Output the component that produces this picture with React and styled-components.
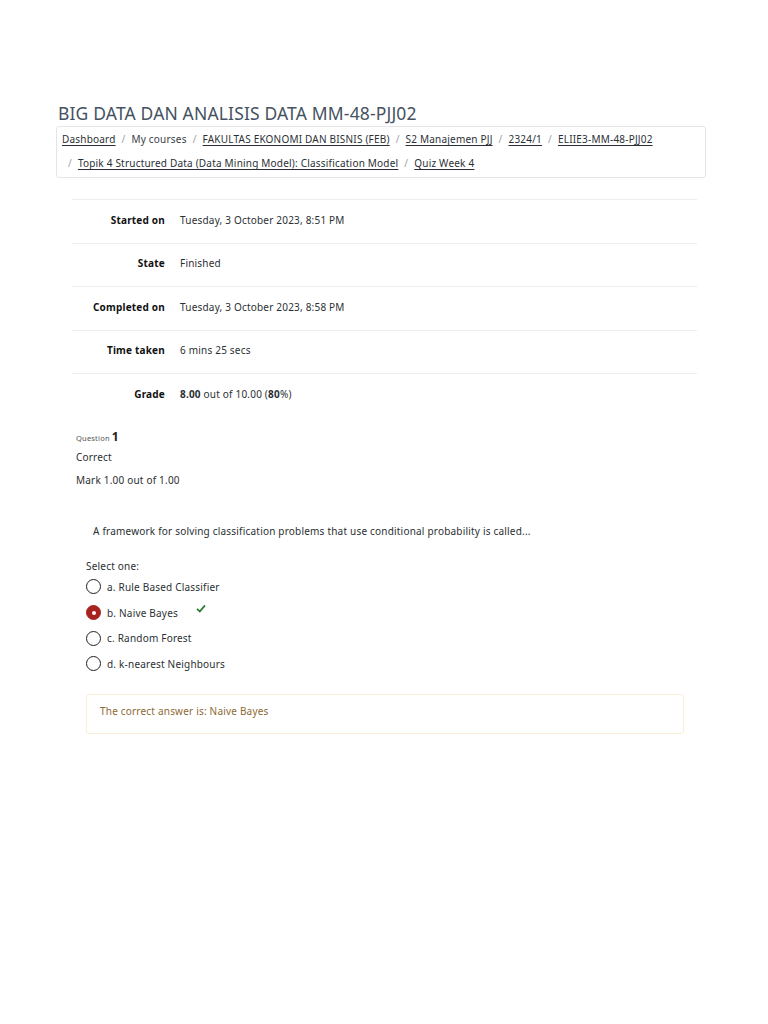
import React from 'react';
import styled, { createGlobalStyle } from 'styled-components';

const GlobalStyle = createGlobalStyle`
  html, body {
    margin: 0;
    padding: 0;
    background: #fff;
  }
  body {
    font-family: "Noto Sans", "Open Sans", sans-serif;
    color: #1d2125;
  }
`;

const Page = styled.div`
  width: 768px;
  min-height: 1024px;
  padding: 101px 62px 0 56px;
  box-sizing: border-box;
`;

const Title = styled.h1`
  margin: 0 0 0 2px;
  font-size: 17.5px;
  font-weight: 400;
  line-height: 24px;
  color: #45525f;
  letter-spacing: 0.15px;
`;

const Breadcrumb = styled.nav`
  margin-top: 1px;
  border: 1px solid #e3e6e8;
  border-radius: 3px;
  padding: 0 5px 2px 5px;
  display: flex;
  flex-wrap: wrap;
  font-size: 10px;
  letter-spacing: 0.2px;
  line-height: 24px;
  color: #3b4148;
`;

const Crumb = styled.span`
  display: inline-flex;
  align-items: center;
  white-space: nowrap;
`;

const CrumbLink = styled.a`
  color: #2a2f35;
  text-decoration: underline;
  text-underline-offset: 2px;
  cursor: pointer;
`;

const Sep = styled.span`
  color: #9aa0a6;
  margin: 0 6px;
`;

const Summary = styled.table`
  margin: 21px 9px 0 16px;
  width: 625px;
  border-collapse: collapse;
  font-size: 10px;
  letter-spacing: 0.2px;
`;

const Row = styled.tr`
  border-top: 1px solid #eceef0;
  height: 43.5px;
`;

const Label = styled.th`
  width: 93px;
  text-align: right;
  font-weight: 700;
  color: #111;
  padding: 0 0 3px 0;
  font-size: 10px;
`;

const Value = styled.td`
  padding: 0 0 3px 15px;
  color: #2b2f33;
`;

const Info = styled.div`
  margin: 12px 0 0 20px;
  font-size: 10px;
  letter-spacing: 0.2px;
  color: #2b2f33;
`;

const QNo = styled.div`
  font-size: 7.5px;
  color: #555;
  line-height: 16px;
  b {
    font-size: 12px;
    color: #1d2125;
    margin-left: 2px;
  }
`;

const InfoLine = styled.div`
  line-height: 23px;
`;

const Content = styled.div`
  margin: 31px 0 0 30px;
  width: 598px;
  font-size: 10px;
  letter-spacing: 0.2px;
  color: #2b2f33;
`;

const QText = styled.p`
  margin: 0 0 0 7px;
  line-height: 16px;
`;

const Prompt = styled.div`
  margin-top: 19px;
  line-height: 16px;
`;

const Options = styled.div`
  display: flex;
  flex-direction: column;
`;

const Option = styled.label`
  display: flex;
  align-items: center;
  height: 25.7px;
`;

const Radio = styled.span`
  width: 15px;
  height: 15px;
  box-sizing: border-box;
  border-radius: 50%;
  border: 1.7px solid ${p => (p.checked ? '#a8231f' : '#222')};
  background: ${p => (p.checked ? '#a8231f' : '#fff')};
  display: inline-flex;
  align-items: center;
  justify-content: center;
  flex: none;
  &::after {
    content: '';
    width: 4px;
    height: 4px;
    border-radius: 50%;
    background: ${p => (p.checked ? '#fff' : 'transparent')};
  }
`;

const OptText = styled.span`
  margin-left: 6px;
  font-size: 10px;
`;

const Check = styled.svg`
  margin-left: 18px;
  margin-top: -8px;
`;

const Feedback = styled.div`
  margin-top: 17px;
  border: 1px solid #fbeed9;
  border-radius: 3px;
  padding: 7px 13px 13px 13px;
  font-size: 10px;
  line-height: 18px;
  color: #8c6a34;
`;

const crumbs = [
  { text: 'Dashboard', link: true },
  { text: 'My courses' },
  { text: 'FAKULTAS EKONOMI DAN BISNIS (FEB)', link: true },
  { text: 'S2 Manajemen PJJ', link: true },
  { text: '2324/1', link: true },
  { text: 'ELIIE3-MM-48-PJJ02', link: true },
  { text: 'Topik 4 Structured Data (Data Mining Model): Classification Model', link: true },
  { text: 'Quiz Week 4', link: true },
];

const options = [
  { key: 'a', text: 'Rule Based Classifier' },
  { key: 'b', text: 'Naive Bayes', checked: true },
  { key: 'c', text: 'Random Forest' },
  { key: 'd', text: 'k-nearest Neighbours' },
];

const App = () => {
  return (
    <>
      <GlobalStyle />
      <Page>
        <Title>BIG DATA DAN ANALISIS DATA MM-48-PJJ02</Title>
        <Breadcrumb>
          {crumbs.map((c, i) => (
            <Crumb key={i}>
              {i > 0 && <Sep>/</Sep>}
              {c.link ? <CrumbLink>{c.text}</CrumbLink> : <span>{c.text}</span>}
            </Crumb>
          ))}
        </Breadcrumb>

        <Summary>
          <tbody>
            <Row>
              <Label>Started on</Label>
              <Value>Tuesday, 3 October 2023, 8:51 PM</Value>
            </Row>
            <Row>
              <Label>State</Label>
              <Value>Finished</Value>
            </Row>
            <Row>
              <Label>Completed on</Label>
              <Value>Tuesday, 3 October 2023, 8:58 PM</Value>
            </Row>
            <Row>
              <Label>Time taken</Label>
              <Value>6 mins 25 secs</Value>
            </Row>
            <Row>
              <Label>Grade</Label>
              <Value><b>8.00</b> out of 10.00 (<b>80</b>%)</Value>
            </Row>
          </tbody>
        </Summary>

        <Info>
          <QNo>Question<b>1</b></QNo>
          <InfoLine>Correct</InfoLine>
          <InfoLine>Mark 1.00 out of 1.00</InfoLine>
        </Info>

        <Content>
          <QText>A framework for solving classification problems that use conditional probability is called...</QText>
          <Prompt>Select one:</Prompt>
          <Options>
            {options.map(o => (
              <Option key={o.key}>
                <Radio checked={o.checked} />
                <OptText>{o.key}. {o.text}</OptText>
                {o.checked && (
                  <Check width="10" height="9" viewBox="0 0 10 9">
                    <path d="M1 4.8 L3.8 7.4 L9 1.4" fill="none" stroke="#2f7d32" strokeWidth="1.8" />
                  </Check>
                )}
              </Option>
            ))}
          </Options>
          <Feedback>The correct answer is: Naive Bayes</Feedback>
        </Content>
      </Page>
    </>
  );
};

export default App;
